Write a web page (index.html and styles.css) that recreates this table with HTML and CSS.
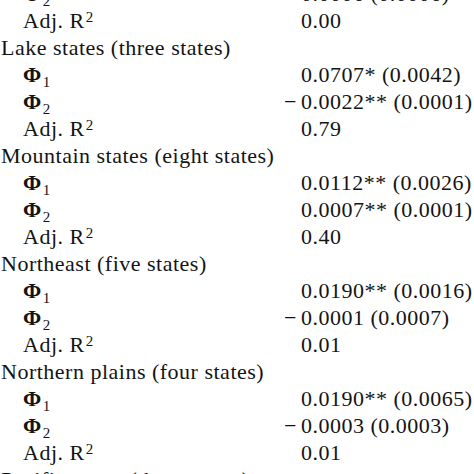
FILE: index.html
```html
<!DOCTYPE html>
<html lang="en">
<head>
<meta charset="utf-8">
<title>Regional estimates</title>
<link rel="stylesheet" href="styles.css">
</head>
<body>
<div class="table">
  <div class="lbl sub"><b class="phi">Φ</b><sub>2</sub></div><div class="val">0.0006 (0.0006)</div>
  <div class="lbl sub">Adj. R<sup>2</sup></div><div class="val">0.00</div>
  <div class="lbl grp">Lake states (three states)</div><div class="val"></div>
  <div class="lbl sub"><b class="phi">Φ</b><sub>1</sub></div><div class="val">0.0707* (0.0042)</div>
  <div class="lbl sub"><b class="phi">Φ</b><sub>2</sub></div><div class="val"><span class="minus">−</span>0.0022** (0.0001)</div>
  <div class="lbl sub">Adj. R<sup>2</sup></div><div class="val">0.79</div>
  <div class="lbl grp">Mountain states (eight states)</div><div class="val"></div>
  <div class="lbl sub"><b class="phi">Φ</b><sub>1</sub></div><div class="val">0.0112** (0.0026)</div>
  <div class="lbl sub"><b class="phi">Φ</b><sub>2</sub></div><div class="val">0.0007** (0.0001)</div>
  <div class="lbl sub">Adj. R<sup>2</sup></div><div class="val">0.40</div>
  <div class="lbl grp">Northeast (five states)</div><div class="val"></div>
  <div class="lbl sub"><b class="phi">Φ</b><sub>1</sub></div><div class="val">0.0190** (0.0016)</div>
  <div class="lbl sub"><b class="phi">Φ</b><sub>2</sub></div><div class="val"><span class="minus">−</span>0.0001 (0.0007)</div>
  <div class="lbl sub">Adj. R<sup>2</sup></div><div class="val">0.01</div>
  <div class="lbl grp">Northern plains (four states)</div><div class="val"></div>
  <div class="lbl sub"><b class="phi">Φ</b><sub>1</sub></div><div class="val">0.0190** (0.0065)</div>
  <div class="lbl sub"><b class="phi">Φ</b><sub>2</sub></div><div class="val"><span class="minus">−</span>0.0003 (0.0003)</div>
  <div class="lbl sub">Adj. R<sup>2</sup></div><div class="val">0.01</div>
  <div class="lbl grp">Pacific states (three states)</div><div class="val"></div>
</div>
</body>
</html>
```
FILE: styles.css
```css
html, body {
  margin: 0;
  padding: 0;
  background: #ffffff;
  overflow: hidden;
}
body {
  font-family: "Liberation Serif", "Times New Roman", serif;
  font-size: 22px;
  letter-spacing: 0.5px;
  color: #141414;
}
.table {
  display: grid;
  grid-template-columns: 301px 1fr;
  grid-auto-rows: 27px;
  line-height: 27px;
  margin-top: -20px;
  white-space: nowrap;
}
.lbl, .val {
  overflow: visible;
}
.grp {
  padding-left: 1px;
}
.sub {
  padding-left: 23px;
}
.phi {
  font-weight: bold;
}
sub {
  font-size: 15px;
  line-height: 0;
  vertical-align: -5px;
  margin-left: 1px;
}
sup {
  font-size: 15px;
  line-height: 0;
  vertical-align: 6px;
  margin-left: 1px;
}
.minus {
  display: inline-block;
  width: 17px;
  margin-left: -17px;
}
```
